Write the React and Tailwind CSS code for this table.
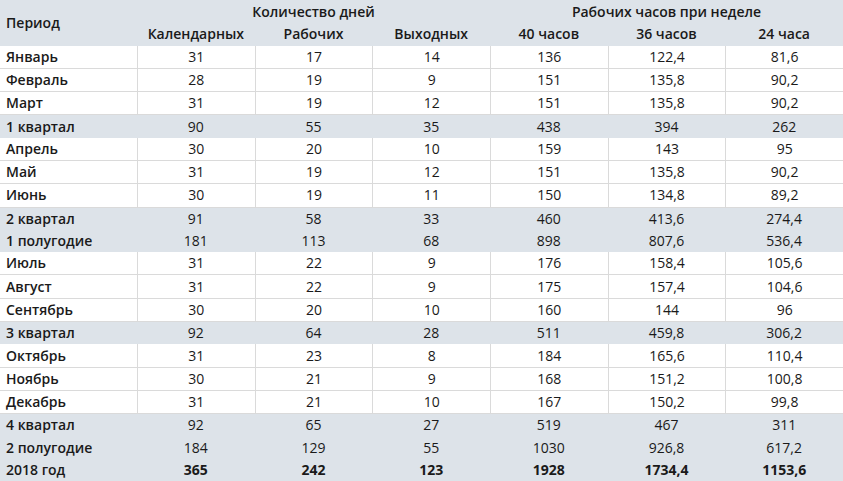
import React from "react";

const rows = [
  ["Январь", "31", "17", "14", "136", "122,4", "81,6", 0],
  ["Февраль", "28", "19", "9", "151", "135,8", "90,2", 0],
  ["Март", "31", "19", "12", "151", "135,8", "90,2", 0],
  ["1 квартал", "90", "55", "35", "438", "394", "262", 1],
  ["Апрель", "30", "20", "10", "159", "143", "95", 0],
  ["Май", "31", "19", "12", "151", "135,8", "90,2", 0],
  ["Июнь", "30", "19", "11", "150", "134,8", "89,2", 0],
  ["2 квартал", "91", "58", "33", "460", "413,6", "274,4", 1],
  ["1 полугодие", "181", "113", "68", "898", "807,6", "536,4", 1],
  ["Июль", "31", "22", "9", "176", "158,4", "105,6", 0],
  ["Август", "31", "22", "9", "175", "157,4", "104,6", 0],
  ["Сентябрь", "30", "20", "10", "160", "144", "96", 0],
  ["3 квартал", "92", "64", "28", "511", "459,8", "306,2", 1],
  ["Октябрь", "31", "23", "8", "184", "165,6", "110,4", 0],
  ["Ноябрь", "30", "21", "9", "168", "151,2", "100,8", 0],
  ["Декабрь", "31", "21", "10", "167", "150,2", "99,8", 0],
  ["4 квартал", "92", "65", "27", "519", "467", "311", 1],
  ["2 полугодие", "184", "129", "55", "1030", "926,8", "617,2", 1],
  ["2018 год", "365", "242", "123", "1928", "1734,4", "1153,6", 2],
];

export default function App() {
  return (
    <div className="w-[843px] h-[481px] overflow-hidden bg-white text-[#1a1a1a] font-['Open_Sans',sans-serif] text-[14px] leading-none flex flex-col">
      <div className="h-[45.5px] shrink-0 bg-[#dde3e9] grid grid-cols-[137px_repeat(6,1fr)] grid-rows-2 font-semibold">
        <div className="row-span-2 flex items-center pl-[6px]">Период</div>
        <div className="col-span-3 flex items-center justify-center pt-[2px]">Количество дней</div>
        <div className="col-span-3 flex items-center justify-center pt-[2px]">Рабочих часов при неделе</div>
        <div className="flex items-center justify-center">Календарных</div>
        <div className="flex items-center justify-center">Рабочих</div>
        <div className="flex items-center justify-center">Выходных</div>
        <div className="flex items-center justify-center">40 часов</div>
        <div className="flex items-center justify-center">36 часов</div>
        <div className="flex items-center justify-center">24 часа</div>
      </div>
      {rows.map((r) => {
        const gray = r[7] > 0;
        const bold = r[7] === 2;
        return (
          <div
            key={r[0]}
            className={
              gray
                ? "flex-1 grid grid-cols-[137px_repeat(6,1fr)] bg-[#dde3e9]"
                : "flex-1 grid grid-cols-[137px_repeat(6,1fr)] bg-white border-b border-[#dadada]"
            }
          >
            <div className="flex items-center pl-[6px] font-semibold">{r[0]}</div>
            {r.slice(1, 7).map((v, i) => (
              <div
                key={i}
                className={
                  (gray ? "" : "border-l border-[#dadada] ") +
                  (bold ? "font-bold " : "") +
                  "flex items-center justify-center"
                }
              >
                {v}
              </div>
            ))}
          </div>
        );
      })}
    </div>
  );
}
